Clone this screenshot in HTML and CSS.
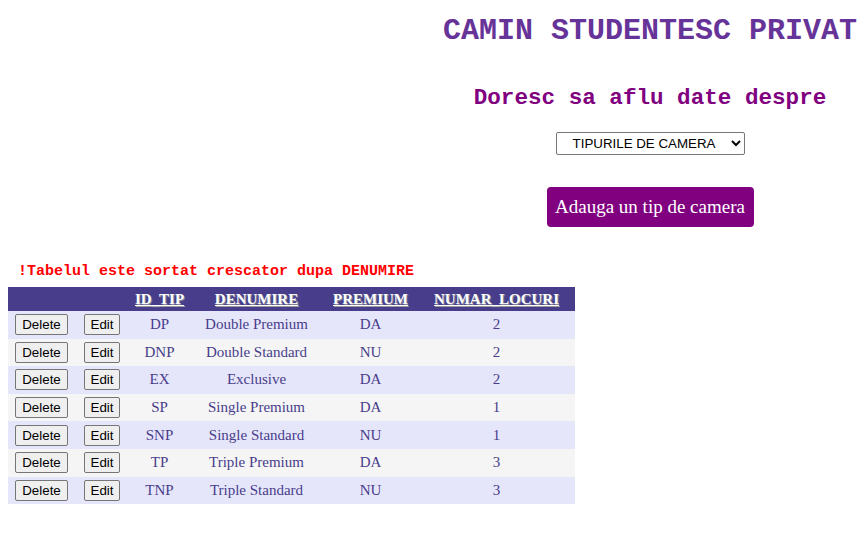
FILE: index.html
```html
<!DOCTYPE html>
<html lang="ro">
<head>
<meta charset="utf-8">
<title>Camin studentesc privat</title>
<link rel="stylesheet" href="styles.css">
</head>
<body>
<div class="top">
  <div class="panel">
    <h1 class="title">CAMIN STUDENTESC PRIVAT</h1>
    <h2 class="subtitle">Doresc sa aflu date despre</h2>
    <select class="picker">
      <option>TIPURILE DE CAMERA</option>
    </select>
    <div class="add-wrap"><button class="add-btn">Adauga un tip de camera</button></div>
  </div>
</div>
<p class="note">!Tabelul este sortat crescator dupa DENUMIRE</p>
<table class="grid">
  <colgroup>
    <col class="c1"><col class="c2"><col class="c3"><col class="c4"><col class="c5"><col class="c6">
  </colgroup>
  <thead>
    <tr><th></th><th></th><th><u>ID_TIP</u></th><th><u>DENUMIRE</u></th><th><u>PREMIUM</u></th><th><u>NUMAR_LOCURI</u></th></tr>
  </thead>
  <tbody>
    <tr><td><button class="act">Delete</button></td><td><button class="act">Edit</button></td><td>DP</td><td>Double Premium</td><td>DA</td><td>2</td></tr>
    <tr><td><button class="act">Delete</button></td><td><button class="act">Edit</button></td><td>DNP</td><td>Double Standard</td><td>NU</td><td>2</td></tr>
    <tr><td><button class="act">Delete</button></td><td><button class="act">Edit</button></td><td>EX</td><td>Exclusive</td><td>DA</td><td>2</td></tr>
    <tr><td><button class="act">Delete</button></td><td><button class="act">Edit</button></td><td>SP</td><td>Single Premium</td><td>DA</td><td>1</td></tr>
    <tr><td><button class="act">Delete</button></td><td><button class="act">Edit</button></td><td>SNP</td><td>Single Standard</td><td>NU</td><td>1</td></tr>
    <tr><td><button class="act">Delete</button></td><td><button class="act">Edit</button></td><td>TP</td><td>Triple Premium</td><td>DA</td><td>3</td></tr>
    <tr><td><button class="act">Delete</button></td><td><button class="act">Edit</button></td><td>TNP</td><td>Triple Standard</td><td>NU</td><td>3</td></tr>
  </tbody>
</table>
</body>
</html>
```
FILE: styles.css
```css
html, body {
  margin: 0;
  padding: 0;
  background: #ffffff;
}
body {
  padding: 8px;
  font-family: "Liberation Serif", "Times New Roman", serif;
}
.top {
  display: flex;
  justify-content: flex-end;
}
.panel {
  width: 434px;
  margin-right: -8px;
  text-align: center;
}
.title {
  margin: 6px 0 0 0;
  font-family: "Liberation Mono", "Courier New", monospace;
  font-weight: bold;
  font-size: 30px;
  line-height: 34px;
  color: #663399;
}
.subtitle {
  margin: 37px 0 0 0;
  font-family: "Liberation Mono", "Courier New", monospace;
  font-weight: bold;
  font-size: 22.6px;
  line-height: 26px;
  color: #800080;
}
.picker {
  margin-top: 21px;
  width: 189px;
  height: 23px;
  font-family: "Liberation Sans", Arial, sans-serif;
  font-size: 13.33px;
  text-align: center;
  text-align-last: center;
  background: #fff;
  border: 1px solid #767676;
  border-radius: 2px;
  color: #000;
}
.add-wrap {
  margin-top: 32px;
}
.add-btn {
  background: #800080;
  color: #ffffff;
  border: none;
  border-radius: 4px;
  font-family: "Liberation Serif", "Times New Roman", serif;
  font-size: 19px;
  height: 40px;
  width: 207px;
  padding: 0;
}
.note {
  margin: 36px 0 6px 10px;
  font-family: "Liberation Mono", "Courier New", monospace;
  font-weight: bold;
  font-size: 15px;
  line-height: 18px;
  color: #ff0000;
}
.grid {
  border-collapse: collapse;
  table-layout: fixed;
  width: 567px;
}
.c1 { width: 67px; }
.c2 { width: 54px; }
.c3 { width: 61px; }
.c4 { width: 133px; }
.c5 { width: 95px; }
.c6 { width: 157px; }
.grid th {
  background: #483d8b;
  color: #ffffff;
  font-size: 15px;
  font-weight: bold;
  height: 24px;
  padding: 0;
  text-align: center;
  text-shadow: 1px 1px 1px #9a9a9a;
}
.grid td {
  height: 27.6px;
  padding: 0;
  text-align: center;
  color: #483d8b;
  font-size: 15px;
}
.grid tbody tr:nth-child(odd) td { background: #e6e6fa; }
.grid tbody tr:nth-child(even) td { background: #f5f5f5; }
.act {
  font-family: "Liberation Sans", Arial, sans-serif;
  font-size: 13.33px;
  padding: 1px 6px;
  height: 21px;
  background: #efefef;
  border: 1px solid #767676;
  border-radius: 2px;
  color: #000;
}
```
